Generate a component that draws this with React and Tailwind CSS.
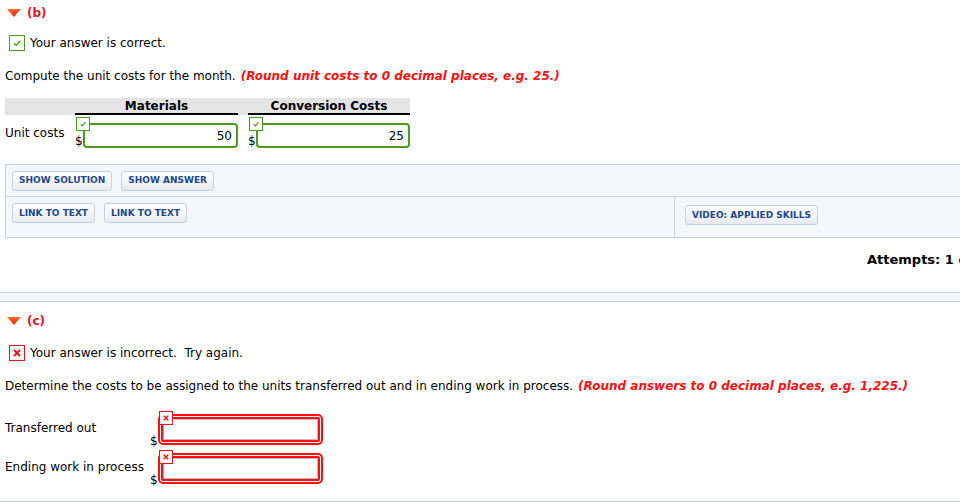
import React from 'react';

function Triangle() {
    return (
        <svg width="14" height="8" viewBox="0 0 14 8">
            <defs>
                <linearGradient id="tri" x1="0" y1="0" x2="0" y2="1">
                    <stop offset="0" stopColor="#ff6a2a" />
                    <stop offset="1" stopColor="#e02a10" />
                </linearGradient>
            </defs>
            <polygon points="0,0 14,0 7,8" fill="url(#tri)" />
        </svg>
    );
}

function CheckBadge({ size = 16 }) {
    return (
        <span
            className="flex items-center justify-center border border-[#4e9a1e] bg-white"
            style={{ width: size, height: size }}
        >
            <svg width={size - 6} height={size - 6} viewBox="0 0 10 10">
                <path d="M2 5.2 L4.2 7.3 L8.2 2.8" fill="none" stroke="#4e9a1e" strokeWidth="1.4" />
            </svg>
        </span>
    );
}

function CrossBadge({ size = 16 }) {
    return (
        <span
            className="flex items-center justify-center border border-[#e8141c] bg-white"
            style={{ width: size, height: size }}
        >
            <svg width={size - 8} height={size - 8} viewBox="0 0 8 8">
                <path d="M1 1 L7 7 M7 1 L1 7" fill="none" stroke="#e8141c" strokeWidth="2" />
            </svg>
        </span>
    );
}

function Btn({ children }) {
    return (
        <button className="h-[20px] px-[6px] border border-[#c6cfdb] rounded-[3px] bg-gradient-to-b from-white to-[#e6ebf1] text-[9px] font-bold text-[#23488a] leading-none whitespace-nowrap">
            {children}
        </button>
    );
}

function GreenCell({ value, width }) {
    return (
        <div className="relative flex items-end pt-[8px]" style={{ width }}>
            <span className="absolute left-[1px] top-[2px]">
                <CheckBadge size={14} />
            </span>
            <span className="leading-none mb-[1px]">$</span>
            <div className="flex-1 h-[25px] border-2 border-[#4e9a1e] rounded-[4px] bg-white flex items-center justify-end pr-[4px]">
                {value}
            </div>
        </div>
    );
}

function RedField({ label }) {
    return (
        <div className="flex items-center h-[39px]">
            <div className="w-[150px] pl-[5px] whitespace-nowrap">{label}</div>
            <div className="relative flex items-end pt-[3px] w-[173px]">
                <span className="absolute left-[9px] top-[0px] z-10">
                    <CrossBadge size={14} />
                </span>
                <span className="leading-none mb-[-2px]">$</span>
                <div className="flex-1 h-[31px] border-[5px] border-double border-[#ff1010] rounded-[5px] bg-white shadow-[inset_0_0_0_1px_#bbbbbb]"></div>
            </div>
        </div>
    );
}

function App() {
    return (
        <div
            className="w-[960px] h-[502px] overflow-hidden bg-white text-[12px] text-[#000]"
            style={{ fontFamily: '"DejaVu Sans", Verdana, sans-serif' }}
        >
            {/* part b */}
            <div className="flex items-center h-[24px] pl-[7px] pt-[2px]">
                <Triangle />
                <span className="ml-[6px] text-[12px] font-bold text-[#e8141c]">(b)</span>
            </div>
            <div className="flex items-center h-[17px] mt-[10px] pl-[9px]">
                <CheckBadge />
                <span className="ml-[5px]">Your answer is correct.</span>
            </div>
            <div className="flex items-center h-[16px] mt-[17px] pl-[5px] whitespace-nowrap">
                Compute the unit costs for the month.
                <span className="ml-[5px] font-bold italic text-[#ff1010]">
                    (Round unit costs to 0 decimal places, e.g. 25.)
                </span>
            </div>

            <div className="mt-[14px] ml-[5px] w-[405px]">
                <div className="flex h-[17px] bg-[#e4e4e4]">
                    <div className="w-[70px]"></div>
                    <div className="w-[163px] border-b-2 border-black text-center font-bold text-[12px] leading-[16px]">Materials</div>
                    <div className="w-[10px]"></div>
                    <div className="w-[162px] border-b-2 border-black text-center font-bold text-[12px] leading-[16px]">Conversion Costs</div>
                </div>
                <div className="flex items-start h-[36px]">
                    <div className="w-[70px] pt-[9px] whitespace-nowrap">Unit costs</div>
                    <GreenCell value="50" width={163} />
                    <div className="w-[10px]"></div>
                    <GreenCell value="25" width={162} />
                </div>
            </div>

            {/* buttons panel */}
            <div className="mt-[13px] ml-[5px] w-[960px] border border-[#c8d3e0] bg-[#f4f7fa]">
                <div className="flex items-center gap-[9px] h-[32px] px-[6px] border-b border-[#c8d3e0]">
                    <Btn>SHOW SOLUTION</Btn>
                    <Btn>SHOW ANSWER</Btn>
                </div>
                <div className="flex h-[40px]">
                    <div className="w-[669px] flex items-start gap-[9px] px-[6px] pt-[6px] border-r border-[#c8d3e0]">
                        <Btn>LINK TO TEXT</Btn>
                        <Btn>LINK TO TEXT</Btn>
                    </div>
                    <div className="flex items-start pl-[10px] pt-[8px]">
                        <Btn>VIDEO: APPLIED SKILLS</Btn>
                    </div>
                </div>
            </div>

            <div className="h-[20px] mt-[12px] flex items-center pl-[867px] text-[13px] font-bold whitespace-nowrap">
                Attempts: 1 of 3 used
            </div>

            <div className="mt-[22px] h-[10px] border-t border-b border-[#c5ccd6] bg-[#f3f7fa]"></div>

            {/* part c */}
            <div className="flex items-center h-[18px] mt-[10px] pl-[7px]">
                <Triangle />
                <span className="ml-[6px] text-[12px] font-bold text-[#e8141c]">(c)</span>
            </div>
            <div className="flex items-center h-[17px] mt-[14px] pl-[9px] whitespace-nowrap">
                <CrossBadge />
                <span className="ml-[5px]">Your answer is incorrect.&nbsp; Try again.</span>
            </div>
            <div className="flex items-center h-[16px] mt-[17px] pl-[5px] whitespace-nowrap">
                Determine the costs to be assigned to the units transferred out and in ending work in process.
                <span className="ml-[5px] font-bold italic text-[#ff1010]">
                    (Round answers to 0 decimal places, e.g. 1,225.)
                </span>
            </div>

            <div className="mt-[14px]">
                <RedField label="Transferred out" />
                <RedField label="Ending work in process" />
            </div>
            <div className="mt-[15px] border-t border-[#c5ccd6]"></div>
        </div>
    );
}

export default App;
